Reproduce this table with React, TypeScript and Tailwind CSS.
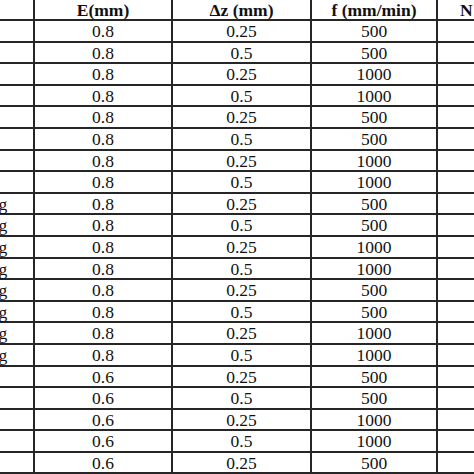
const rows = [
  { p: "Line", e: "0.8", dz: "0.25", f: "500" },
  { p: "Line", e: "0.8", dz: "0.5", f: "500" },
  { p: "Line", e: "0.8", dz: "0.25", f: "1000" },
  { p: "Line", e: "0.8", dz: "0.5", f: "1000" },
  { p: "Line", e: "0.8", dz: "0.25", f: "500" },
  { p: "Line", e: "0.8", dz: "0.5", f: "500" },
  { p: "Line", e: "0.8", dz: "0.25", f: "1000" },
  { p: "Line", e: "0.8", dz: "0.5", f: "1000" },
  { p: "Zigzag", e: "0.8", dz: "0.25", f: "500" },
  { p: "Zigzag", e: "0.8", dz: "0.5", f: "500" },
  { p: "Zigzag", e: "0.8", dz: "0.25", f: "1000" },
  { p: "Zigzag", e: "0.8", dz: "0.5", f: "1000" },
  { p: "Zigzag", e: "0.8", dz: "0.25", f: "500" },
  { p: "Zigzag", e: "0.8", dz: "0.5", f: "500" },
  { p: "Zigzag", e: "0.8", dz: "0.25", f: "1000" },
  { p: "Zigzag", e: "0.8", dz: "0.5", f: "1000" },
  { p: "Line", e: "0.6", dz: "0.25", f: "500" },
  { p: "Line", e: "0.6", dz: "0.5", f: "500" },
  { p: "Line", e: "0.6", dz: "0.25", f: "1000" },
  { p: "Line", e: "0.6", dz: "0.5", f: "1000" },
  { p: "Line", e: "0.6", dz: "0.25", f: "500" },
];

const cell = "flex items-center justify-center border-r-2 border-[#262626] whitespace-nowrap pt-[2px]";

export default function App() {
  return (
    <div className="w-[474px] h-[474px] overflow-hidden bg-white text-[#111] text-[17.5px] leading-none font-['Liberation_Serif',serif]">
      <div className="-mt-[0.6px] ml-[-67px] w-[800px]">
        <div className="flex h-[21.6px] border-b-2 border-[#262626] font-bold pt-[1px]">
          <div className={`${cell} w-[102px]`}>Id</div>
          <div className={`${cell} w-[138px]`}>E(mm)</div>
          <div className={`${cell} w-[139px]`}>Δz (mm)</div>
          <div className={`${cell} w-[126px]`}>f (mm/min)</div>
          <div className="flex items-center pl-[22px] pt-[2px] whitespace-nowrap">N (layers)</div>
        </div>
        {rows.map((r, i) => (
          <div key={i} className="flex h-[21.6px] border-b-2 border-[#262626]">
            <div className={`${cell} w-[102px]`}>{r.p}</div>
            <div className={`${cell} w-[138px]`}>{r.e}</div>
            <div className={`${cell} w-[139px]`}>{r.dz}</div>
            <div className={`${cell} w-[126px]`}>{r.f}</div>
            <div className="flex-1" />
          </div>
        ))}
      </div>
    </div>
  );
}
